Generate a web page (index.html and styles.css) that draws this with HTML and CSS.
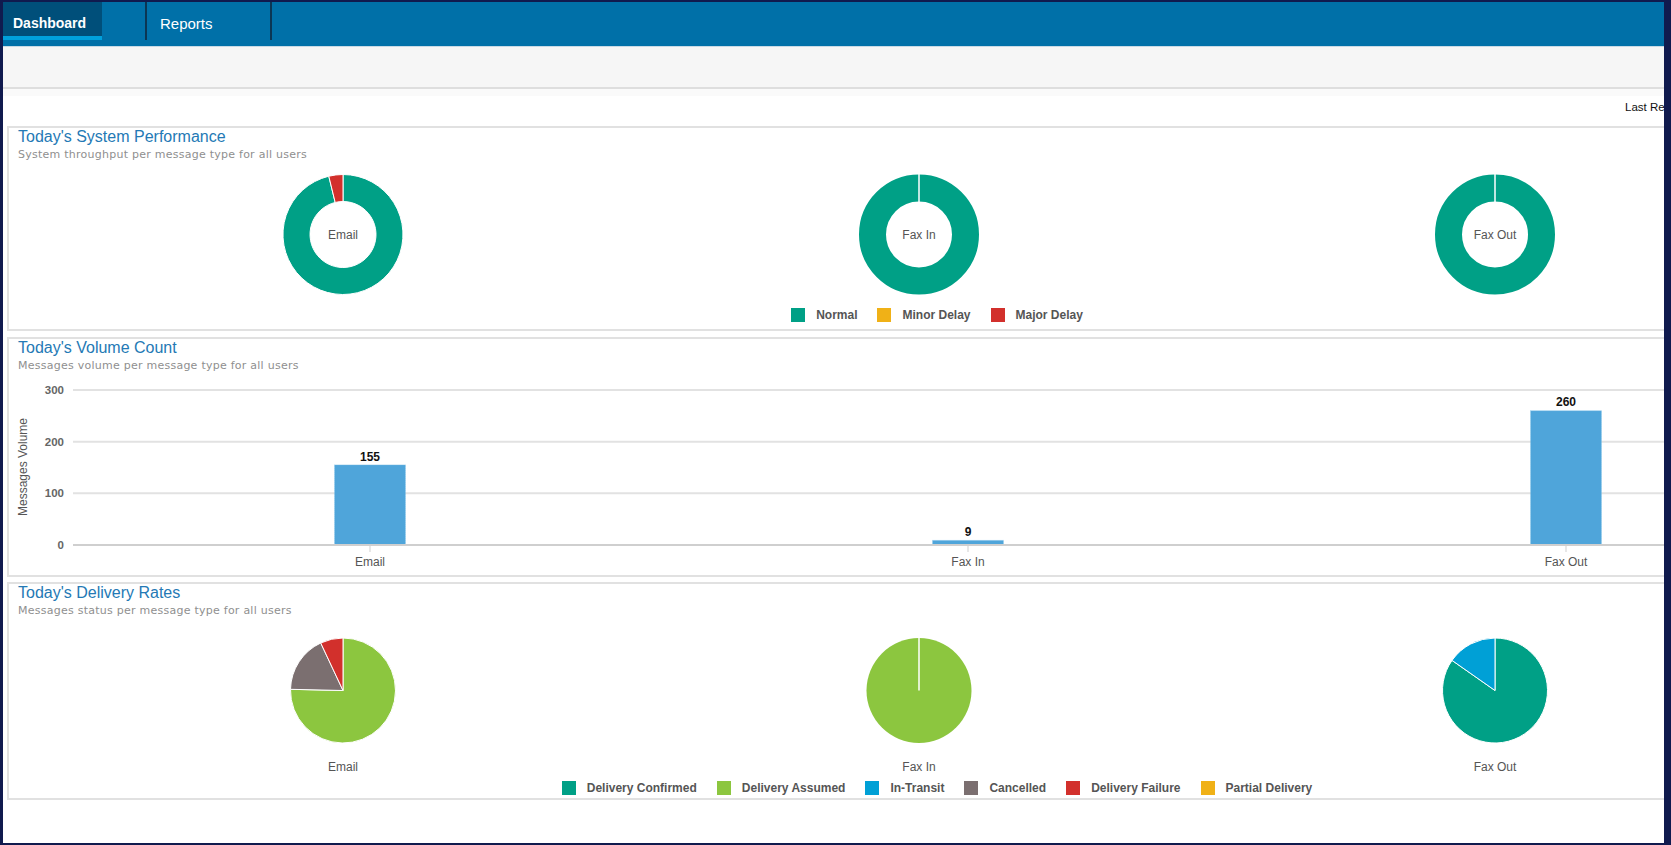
FILE: index.html
```html
<!DOCTYPE html>
<html>
<head>
<meta charset="utf-8">
<title>Dashboard</title>
<link rel="stylesheet" href="styles.css">
</head>
<body>
<div class="frame">
  <div class="page">
    <nav class="nav">
      <a class="tab active">Dashboard</a>
      <a class="tab reports">Reports</a>
    </nav>
    <div class="toolbar"></div>
    <div class="strip"></div>
    <div class="refresh-row"><span>Last Refreshed: 02/14/2019 10:25:41 AM</span></div>

    <section class="card card-perf">
      <h2 class="card-title">Today's System Performance</h2>
      <p class="card-sub">System throughput per message type for all users</p>
      <div class="chart-row rings">
        <svg class="ring" width="140" height="142" viewBox="0 0 140 142">
          <path class="c-teal sep" d="M70,12.5 A60,60 0 1,1 55.79,14.2 L62.19,40.44 A33,33 0 1,0 70,39.5 Z"/>
          <path class="c-red sep" d="M70,12.5 A60,60 0 0,0 55.79,14.2 L62.19,40.44 A33,33 0 0,1 70,39.5 Z"/>
          <text class="center-label" x="70" y="76.5">Email</text>
        </svg>
        <svg class="ring" width="140" height="142" viewBox="0 0 140 142">
          <circle class="ring-full" cx="70" cy="72.5" r="46.5"/>
          <line class="sep-line" x1="70" y1="12" x2="70" y2="40"/>
          <text class="center-label" x="70" y="76.5">Fax In</text>
        </svg>
        <svg class="ring" width="140" height="142" viewBox="0 0 140 142">
          <circle class="ring-full" cx="70" cy="72.5" r="46.5"/>
          <line class="sep-line" x1="70" y1="12" x2="70" y2="40"/>
          <text class="center-label" x="70" y="76.5">Fax Out</text>
        </svg>
      </div>
      <div class="legend legend-perf">
        <span class="legend-item"><i class="swatch s-teal"></i>Normal</span>
        <span class="legend-item"><i class="swatch s-yellow"></i>Minor Delay</span>
        <span class="legend-item"><i class="swatch s-red"></i>Major Delay</span>
      </div>
    </section>

    <section class="card card-volume">
      <h2 class="card-title">Today's Volume Count</h2>
      <p class="card-sub">Messages volume per message type for all users</p>
      <svg class="bars" width="1856" height="200" viewBox="0 0 1856 200">
        <g class="grid">
          <line x1="64" y1="17" x2="1856" y2="17"/>
          <line x1="64" y1="68.67" x2="1856" y2="68.67"/>
          <line x1="64" y1="120.33" x2="1856" y2="120.33"/>
        </g>
        <g class="ticks">
          <line x1="361" y1="172" x2="361" y2="179"/>
          <line x1="959" y1="172" x2="959" y2="179"/>
          <line x1="1557" y1="172" x2="1557" y2="179"/>
        </g>
        <g class="y-labels">
          <text x="55" y="21">300</text>
          <text x="55" y="72.7">200</text>
          <text x="55" y="124.3">100</text>
          <text x="55" y="176">0</text>
        </g>
        <text class="axis-title" transform="translate(18,94) rotate(-90)">Messages Volume</text>
        <rect class="bar" x="325.5" y="91.9" width="71" height="80.1"/>
        <rect class="bar" x="923.5" y="167.35" width="71" height="4.65"/>
        <rect class="bar" x="1521.5" y="37.7" width="71" height="134.3"/>
        <line class="axis" x1="64" y1="172" x2="1856" y2="172"/>
        <g class="bar-values">
          <text x="361" y="87.5">155</text>
          <text x="959" y="162.5">9</text>
          <text x="1557" y="32.5">260</text>
        </g>
        <g class="cat-labels">
          <text x="361" y="193">Email</text>
          <text x="959" y="193">Fax In</text>
          <text x="1557" y="193">Fax Out</text>
        </g>
      </svg>
    </section>

    <section class="card card-delivery">
      <h2 class="card-title">Today's Delivery Rates</h2>
      <p class="card-sub">Messages status per message type for all users</p>
      <div class="chart-row pies">
        <svg class="pie" width="140" height="160" viewBox="0 0 140 160">
          <path class="c-green sep" d="M70,72.5 L70,20 A52.5,52.5 0 1,1 17.51,71.31 Z"/>
          <path class="c-gray sep" d="M70,72.5 L17.51,71.31 A52.5,52.5 0 0,1 47.73,24.96 Z"/>
          <path class="c-red sep" d="M70,72.5 L47.73,24.96 A52.5,52.5 0 0,1 70,20 Z"/>
          <text class="pie-label" x="70" y="153">Email</text>
        </svg>
        <svg class="pie" width="140" height="160" viewBox="0 0 140 160">
          <circle class="c-green" cx="70" cy="72.5" r="52.5"/>
          <line class="sep-line" x1="70" y1="19.5" x2="70" y2="72.5"/>
          <text class="pie-label" x="70" y="153">Fax In</text>
        </svg>
        <svg class="pie" width="140" height="160" viewBox="0 0 140 160">
          <path class="c-teal sep" d="M70,72.5 L70,20 A52.5,52.5 0 1,1 27,42.39 Z"/>
          <path class="c-blue sep" d="M70,72.5 L27,42.39 A52.5,52.5 0 0,1 70,20 Z"/>
          <text class="pie-label" x="70" y="153">Fax Out</text>
        </svg>
      </div>
      <div class="legend legend-delivery">
        <span class="legend-item"><i class="swatch s-teal"></i>Delivery Confirmed</span>
        <span class="legend-item"><i class="swatch s-green"></i>Delivery Assumed</span>
        <span class="legend-item"><i class="swatch s-blue"></i>In-Transit</span>
        <span class="legend-item"><i class="swatch s-gray"></i>Cancelled</span>
        <span class="legend-item"><i class="swatch s-red"></i>Delivery Failure</span>
        <span class="legend-item"><i class="swatch s-yellow"></i>Partial Delivery</span>
      </div>
    </section>
  </div>
</div>
</body>
</html>
```

FILE: styles.css
```css
html, body {
  margin: 0;
  padding: 0;
}

body {
  background: #101a4e;
  width: 1671px;
  height: 845px;
  overflow: hidden;
}

.frame {
  margin: 2px 7px 2px 3px;
  height: 841px;
  overflow: hidden;
  background: #ffffff;
}

.page {
  width: 1880px;
  font-family: "Liberation Sans", Arial, sans-serif;
  color: #333;
}

/* ---------- navigation ---------- */
.nav {
  height: 44px;
  background: #0070a8;
  border-bottom: 1px solid #c8dae6;
  display: flex;
  align-items: flex-start;
}

.tab {
  box-sizing: border-box;
  height: 38px;
  display: flex;
  align-items: center;
  color: #ffffff;
  text-decoration: none;
  white-space: nowrap;
}

.tab.active {
  width: 99px;
  padding: 8px 0 0 10px;
  background: #004f7a;
  border-bottom: 4px solid #00a0dc;
  font-size: 14px;
  font-weight: bold;
}

.tab.reports {
  width: 127px;
  margin-left: 43px;
  padding: 4px 0 0 13px;
  border-left: 2px solid #0b3654;
  border-right: 2px solid #0b3654;
  font-size: 15px;
}

.toolbar {
  height: 40px;
  background: #f6f6f6;
  border-bottom: 2px solid #dedede;
}

.strip {
  height: 7px;
  background: #fafafa;
}

.refresh-row {
  padding: 4px 0 12px 1622px;
  font-size: 11.5px;
  line-height: 14px;
  color: #111;
  white-space: nowrap;
}

/* ---------- cards ---------- */
.card {
  box-sizing: border-box;
  width: 1860px;
  margin-left: 4px;
  border: 2px solid #e1e1e1;
  background: #fff;
}

.card-perf { margin-bottom: 6px; padding-bottom: 5px; }
.card-volume { margin-bottom: 5px; padding-bottom: 2px; }
.card-delivery { padding-bottom: 1px; }

.card-title {
  margin: 0;
  padding-left: 9px;
  font-size: 16px;
  line-height: 18px;
  font-weight: normal;
  color: #2479b5;
}

.card-sub {
  margin: 2px 0 0;
  padding-left: 9px;
  font-family: "DejaVu Sans", Verdana, sans-serif;
  font-size: 11px;
  line-height: 14px;
  letter-spacing: 0.25px;
  color: #8f8f8f;
}

.chart-row {
  display: grid;
  grid-template-columns: repeat(3, 576px);
  justify-items: center;
  margin-left: 46px;
}

.chart-row svg { display: block; }

.rings { height: 142px; }
.pies { height: 160px; }

/* ---------- svg shapes ---------- */
.c-teal { fill: #00a086; }
.c-red { fill: #d2302c; }
.c-green { fill: #8cc63f; }
.c-gray { fill: #7b6f70; }
.c-blue { fill: #00a0d6; }

.sep {
  stroke: #ffffff;
  stroke-width: 1;
  stroke-linejoin: round;
}

.ring-full {
  fill: none;
  stroke: #00a086;
  stroke-width: 27;
}

.sep-line {
  stroke: #ffffff;
  stroke-width: 1.5;
}

.center-label,
.pie-label {
  font-family: "Liberation Sans", Arial, sans-serif;
  font-size: 12px;
  fill: #555;
  text-anchor: middle;
}

/* ---------- bar chart ---------- */
.bars {
  display: block;
  font-family: "Liberation Sans", Arial, sans-serif;
}

.grid line {
  stroke: #e2e2e2;
  stroke-width: 2;
}

.axis {
  stroke: #cfcfcf;
  stroke-width: 2;
}

.ticks line {
  stroke: #cfcfcf;
  stroke-width: 1;
}

.y-labels text {
  font-size: 11.5px;
  font-weight: bold;
  fill: #666;
  text-anchor: end;
}

.axis-title {
  font-size: 12px;
  fill: #555;
  text-anchor: middle;
}

.bar {
  fill: #4fa5da;
  stroke: #8cc8ec;
  stroke-width: 0.6;
  stroke-dasharray: 1 1;
}

.bar-values text {
  font-size: 12px;
  font-weight: bold;
  fill: #111;
  text-anchor: middle;
}

.cat-labels text {
  font-size: 12px;
  fill: #555;
  text-anchor: middle;
}

/* ---------- legends ---------- */
.legend {
  display: flex;
  justify-content: center;
  align-items: center;
  gap: 20px;
  height: 18px;
  font-size: 12px;
  font-weight: bold;
  color: #555;
  white-space: nowrap;
}

.legend-perf { margin-top: 2px; }
.legend-delivery { margin-top: 1px; }

.legend-item {
  display: flex;
  align-items: center;
  gap: 11px;
}

.swatch {
  display: block;
  width: 14px;
  height: 14px;
}

.s-teal { background: #00a086; }
.s-yellow { background: #f0b117; }
.s-red { background: #d2302c; }
.s-green { background: #8cc63f; }
.s-blue { background: #00a0d6; }
.s-gray { background: #7b6f70; }
```
